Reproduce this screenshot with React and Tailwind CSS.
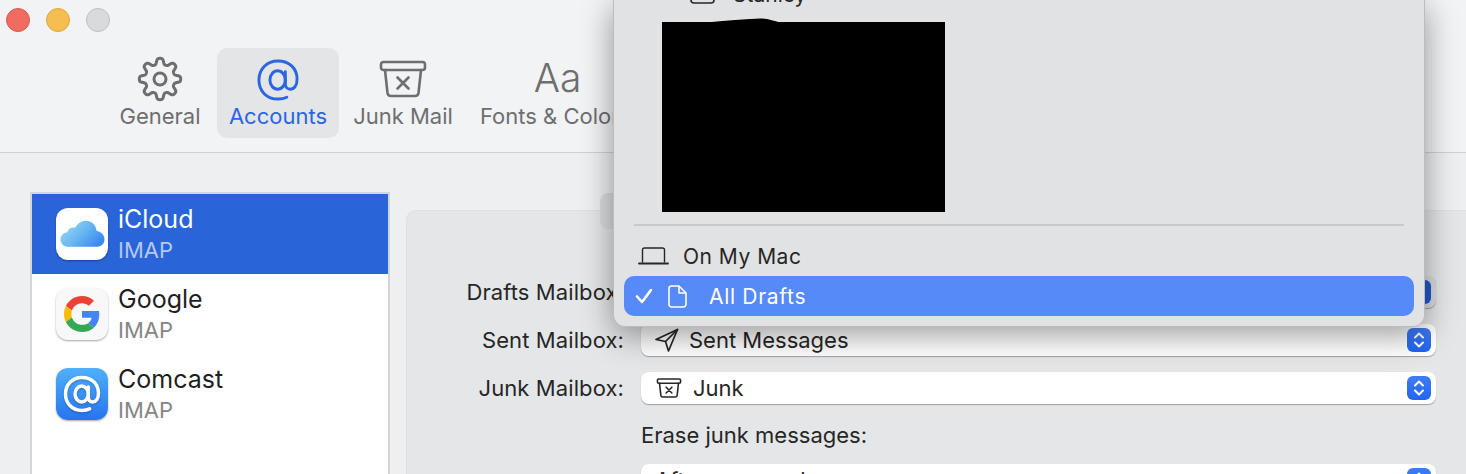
const gearPath = (() => {
  const pts = [];
  for (let i = 0; i < 240; i++) {
    const t = (i / 240) * Math.PI * 2;
    const r = 17.8 + 2.9 * (Math.tanh(1.7 * Math.cos(8 * t)) / Math.tanh(1.7));
    pts.push(`${(24 + r * Math.sin(t)).toFixed(2)} ${(24 - r * Math.cos(t)).toFixed(2)}`);
  }
  return `M${pts.join(" L")} Z`;
})();

const Stepper = ({ dark }) => (
  <div
    className={`flex items-center justify-center w-6 h-6 rounded-[6px] ${
      dark ? "bg-[#2459d0]" : "bg-gradient-to-b from-[#3f7cf6] to-[#2264f2]"
    }`}
  >
    <svg width="12" height="18" viewBox="0 0 12 18" fill="none" stroke="white" strokeWidth="2" strokeLinecap="round" strokeLinejoin="round">
      <path d="M2 6.5 L6 2.5 L10 6.5" />
      <path d="M2 11.5 L6 15.5 L10 11.5" />
    </svg>
  </div>
);

const JunkIcon = ({ className, strokeWidth = 2 }) => (
  <svg className={className} viewBox="0 0 48 38" fill="none" stroke="currentColor" strokeWidth={strokeWidth} strokeLinecap="round" strokeLinejoin="round">
    <rect x="2" y="2" width="44" height="8" rx="2.5" />
    <path d="M6 10 L8.5 33 Q9 36 12 36 H36 Q39 36 39.5 33 L42 10" />
    <path d="M18.5 17.5 L29.5 28.5 M29.5 17.5 L18.5 28.5" />
  </svg>
);

const AtIcon = ({ className, strokeWidth = 1.6 }) => (
  <svg className={className} viewBox="0 0 24 24" fill="none" stroke="currentColor" strokeWidth={strokeWidth} strokeLinecap="round" strokeLinejoin="round">
    <ellipse cx="11.8" cy="12" rx="4.2" ry="5" />
    <path d="M16 7.5 V14 C16 16 17.2 17 18.6 17 C20.8 17 22.4 15 22.4 11.5 C22.4 5.5 18 1.6 12 1.6 C5.8 1.6 1.6 6.2 1.6 12 C1.6 18 5.8 22.4 12 22.4 C13.8 22.4 15.4 22.1 16.8 21.4" />
  </svg>
);

const CloudIcon = () => (
  <svg width="45" height="28" viewBox="0 0 46 28">
    <defs>
      <linearGradient id="cloudFill" x1="0" y1="0" x2="1" y2="0.6">
        <stop offset="0" stopColor="#a8dcf8" />
        <stop offset="0.55" stopColor="#6ab8f2" />
        <stop offset="1" stopColor="#3d8df0" />
      </linearGradient>
    </defs>
    <path
      d="M9 27 C3.5 27 0.5 23.5 0.5 19.5 C0.5 15.5 3.5 12.5 7.5 12.3 C8.5 8.5 12 6.5 15.5 7.5 C18 3 22 0.5 26.5 0.5 C32.5 0.5 37 5 37.5 11 C42 11.5 45.5 15 45.5 19.5 C45.5 24 42 27 37.5 27 Z"
      fill="url(#cloudFill)"
    />
  </svg>
);

const GoogleIcon = () => (
  <svg width="36" height="38" viewBox="0 0 48 48">
    <path fill="#EA4335" d="M24 9.5c3.54 0 6.71 1.22 9.21 3.6l6.85-6.85C35.9 2.38 30.47 0 24 0 14.62 0 6.51 5.38 2.56 13.22l7.98 6.19C12.43 13.72 17.74 9.5 24 9.5z" />
    <path fill="#4285F4" d="M46.98 24.55c0-1.57-.15-3.09-.38-4.55H24v9.02h12.94c-.58 2.96-2.26 5.48-4.78 7.18l7.73 6c4.51-4.18 7.09-10.36 7.09-17.65z" />
    <path fill="#FBBC05" d="M10.53 28.59c-.48-1.45-.76-2.99-.76-4.59s.27-3.14.76-4.59l-7.98-6.19C.92 16.46 0 20.12 0 24c0 3.88.92 7.54 2.56 10.78l7.97-6.19z" />
    <path fill="#34A853" d="M24 48c6.48 0 11.93-2.13 15.89-5.81l-7.73-6c-2.15 1.45-4.92 2.3-8.16 2.3-6.26 0-11.57-4.22-13.47-9.91l-7.98 6.19C6.51 42.62 14.62 48 24 48z" />
  </svg>
);

const accounts = [
  { name: "iCloud", selected: true },
  { name: "Google" },
  { name: "Comcast" },
];

const AccountIcon = ({ name }) => {
  if (name === "iCloud") {
    return (
      <div className="flex items-center justify-center w-[52px] h-[52px] rounded-[12px] bg-white shadow-[0_1px_2px_rgba(0,0,0,0.35)]">
        <CloudIcon />
      </div>
    );
  }
  if (name === "Google") {
    return (
      <div className="flex items-center justify-center w-[52px] h-[52px] rounded-[12px] bg-[#f8f8f8] shadow-[0_1px_2px_rgba(0,0,0,0.35)]">
        <GoogleIcon />
      </div>
    );
  }
  return (
    <div className="flex items-center justify-center w-[52px] h-[52px] rounded-[12px] bg-gradient-to-b from-[#50b0fb] to-[#2873ee] text-white shadow-[0_1px_2px_rgba(0,0,0,0.35)]">
      <AtIcon className="w-[38px] h-[38px] drop-shadow-[0_1px_1px_rgba(0,0,0,0.25)]" strokeWidth={2.2} />
    </div>
  );
};

const MailRow = ({ label, icon, text, shaded }) => (
  <div className="flex items-center h-8">
    <div className="w-[217px] shrink-0 text-right text-[22px] tracking-[0.1px] text-[#262626] whitespace-nowrap">{label}</div>
    <div
      className={`flex items-center ml-[17px] w-[795px] h-8 pl-[14px] pr-[5px] rounded-[8px] text-[22px] text-[#262626] shadow-[0_1px_1px_rgba(0,0,0,0.3)] ${
        shaded ? "bg-[#dcddde]" : "bg-white"
      }`}
    >
      {icon}
      <span className="flex-1">{text}</span>
      <Stepper dark={shaded} />
    </div>
  </div>
);

export default function App() {
  return (
    <div className="relative w-[1466px] h-[474px] overflow-hidden bg-[#eeeff1] font-[Inter,'Liberation_Sans',sans-serif]">
      {/* toolbar */}
      <div className="h-[153px] bg-[#f2f3f5] border-b border-[#d0d1d3]">
        <div className="flex gap-[16px] pt-2 pl-[6px]">
          <div className="w-6 h-6 rounded-full bg-[#f06b62] border border-[#dc5a50]" />
          <div className="w-6 h-6 rounded-full bg-[#f6be50] border border-[#dfa63c]" />
          <div className="w-6 h-6 rounded-full bg-[#d9dadc] border border-[#bfc0c2]" />
        </div>
        <div className="flex items-start pl-[103px] mt-4 text-[22px] leading-[26px] text-[#6e6e6e]">
          <div className="flex flex-col items-center w-[114px] h-[90px] pt-[7px]">
            <svg className="w-12 h-12" viewBox="0 0 48 48" fill="none" stroke="currentColor" strokeWidth="3" strokeLinejoin="round">
              <path d={gearPath} />
              <circle cx="24" cy="24" r="6" />
            </svg>
            <span>General</span>
          </div>
          <div className="flex flex-col items-center w-[122px] h-[90px] pt-[10px] rounded-[10px] bg-[#e4e5e7] text-[#2a66e3]">
            <AtIcon className="w-[44px] h-[44px]" />
            <span className="mt-[1px]">Accounts</span>
          </div>
          <div className="flex flex-col items-center w-[128px] h-[90px] pt-[12px]">
            <JunkIcon className="w-[48px] h-[38px]" strokeWidth={2.6} />
            <span className="mt-[5px]">Junk Mail</span>
          </div>
          <div className="flex flex-col items-center ml-[13px] pt-[8px] whitespace-nowrap">
            <span className="ml-[4px] text-[39px] leading-[44px] font-light text-[#6e6e6e]">Aa</span>
            <span className="mt-[3px]">Fonts &amp; Colors</span>
          </div>
        </div>
      </div>

      {/* main area */}
      <div className="flex items-start pl-[30px] pt-[39px]">
        <div className="w-[360px] h-[300px] shrink-0 bg-white border-2 border-[#d4d5d7]">
          {accounts.map((a) => (
            <div
              key={a.name}
              className={`flex items-center h-[80px] pl-[24px] ${a.selected ? "bg-[#2965d9]" : ""}`}
            >
              <AccountIcon name={a.name} />
              <div className="ml-[10px] flex flex-col">
                <span className={`text-[25px] leading-[30px] ${a.selected ? "text-white" : "text-[#1f1f1f]"}`}>{a.name}</span>
                <span className={`mt-[1px] -mb-[1px] text-[22px] leading-[30px] ${a.selected ? "text-[#b3c9f3]" : "text-[#858585]"}`}>IMAP</span>
              </div>
            </div>
          ))}
        </div>

        <div className="relative flex-1 ml-[16px] mt-[18px] h-[300px] pt-[65px] rounded-tl-[10px] bg-[#e5e6e8] border-t border-l border-[#dfe0e2]">
          <div className="absolute -top-[18px] left-[193px] w-[60px] h-[36px] rounded-[8px] bg-[#dcdde0]" />
          <div className="flex flex-col gap-4">
            <MailRow label="Drafts Mailbox:" text="All Drafts" shaded />
            <MailRow
              label="Sent Mailbox:"
              text="Sent Messages"
              icon={
                <svg className="w-6 h-6 mr-[10px] text-[#262626]" viewBox="0 0 24 24" fill="none" stroke="currentColor" strokeWidth="1.7" strokeLinejoin="round" strokeLinecap="round">
                  <path d="M22.5 1.5 L1 11.5 L10.5 13.5 L13.5 23 Z" />
                  <path d="M22.5 1.5 L10.5 13.5" />
                </svg>
              }
            />
            <MailRow
              label="Junk Mailbox:"
              text="Junk"
              icon={<JunkIcon className="w-[26px] h-[20px] mr-[11px] ml-[1px] text-[#262626]" strokeWidth={3} />}
            />
          </div>
          <div className="ml-[234px] mt-[19px] h-[41px] text-[22px] leading-[24px] text-[#262626]">Erase junk messages:</div>
          <div className="flex items-center ml-[234px] w-[795px] h-8 pl-[14px] pr-[5px] rounded-[8px] bg-white text-[22px] text-[#262626] shadow-[0_1px_1px_rgba(0,0,0,0.3)]">
            <span className="flex-1">After one week</span>
            <Stepper />
          </div>
        </div>
      </div>

      {/* open mailbox menu */}
      <div className="absolute left-[613px] top-0 w-[812px] h-[327px] overflow-hidden rounded-b-[12px] bg-[#e1e2e4] border-x border-b border-[#bcbcbe] shadow-[0_8px_32px_rgba(0,0,0,0.4)] text-[21px] text-[#262626]">
        <div className="flex items-center h-10 -mt-[25px] pl-[76px]">
          <svg className="w-[25px] h-[17px] mr-[18px]" viewBox="0 0 25 17" fill="none" stroke="currentColor" strokeWidth="1.6">
            <rect x="1" y="1" width="23" height="15" rx="3" />
          </svg>
          <span>Stanley</span>
        </div>
        <div className="relative ml-[48px] mt-[7px] w-[283px] h-[190px] bg-black">
          <svg className="absolute left-[40px] -top-[4px]" width="90" height="5" viewBox="0 0 90 5">
            <path d="M0 5 C20 3 40 1 58 0.5 C66 0.5 72 3 80 5 Z" fill="black" />
          </svg>
        </div>
        <div className="mx-[20px] mt-[12px] h-[2px] bg-[#c8c9cb]" />
        <div className="flex items-center h-10 mt-[10px] pl-[24px]">
          <svg className="w-[31px] h-[18px] mr-[14px]" viewBox="0 0 31 18" fill="none" stroke="currentColor" strokeWidth="1.4" strokeLinecap="round">
            <path d="M4.5 15 V3 Q4.5 1 6.5 1 H24.5 Q26.5 1 26.5 3 V15" />
            <path d="M1 16.5 H30" strokeWidth="1.8" />
          </svg>
          <span className="pt-[2px] tracking-[0.5px]">On My Mac</span>
        </div>
        <div className="flex items-center mx-[10px] h-10 pl-[11px] rounded-[10px] bg-[#568af9] text-white">
          <svg className="w-[18px] h-[16px]" viewBox="0 0 18 16" fill="none" stroke="white" strokeWidth="2.6" strokeLinecap="round" strokeLinejoin="round">
            <path d="M2 8.5 L7 14 L16 2" />
          </svg>
          <svg className="w-[19px] h-[23px] ml-[15px]" viewBox="0 0 19 23" fill="none" stroke="white" strokeWidth="1.6" strokeLinejoin="round">
            <path d="M3.5 1 H11 L18 8 V19 Q18 22 15 22 H4 Q1 22 1 19 V3.5 Q1 1 3.5 1 Z" />
            <path d="M11 1 V8 H18" />
          </svg>
          <span className="ml-[22px] pt-[2px] tracking-[0.7px]">All Drafts</span>
        </div>
      </div>
    </div>
  );
}
